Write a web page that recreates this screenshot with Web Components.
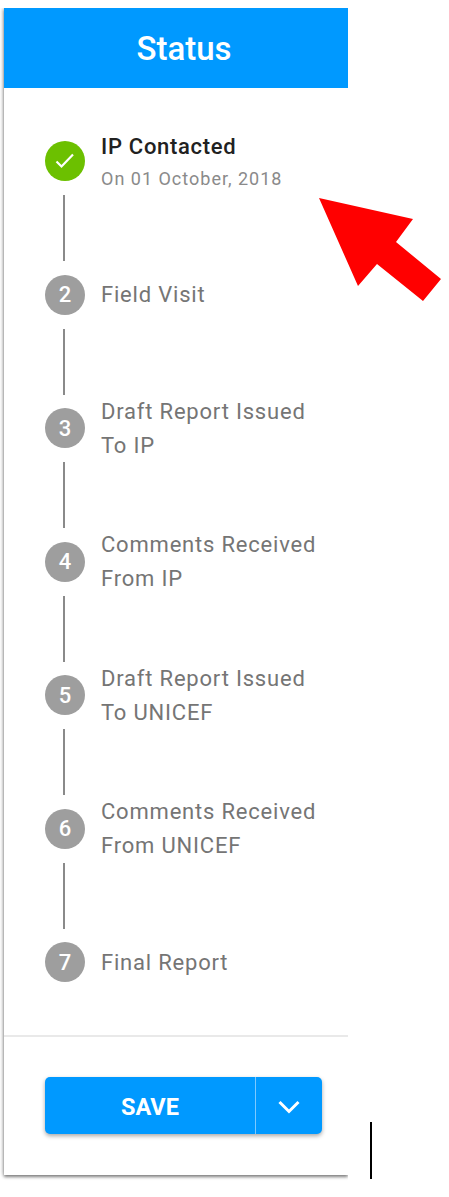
<!DOCTYPE html>
<html>
<head>
<meta charset="utf-8">
<style>
    html, body { margin: 0; background: #fff; }
    body { width: 449px; height: 1197px; position: relative; overflow: hidden; font-family: Roboto, "Liberation Sans", sans-serif; }
    status-panel { margin: 8px 0 0 4px; }
</style>
</head>
<body>
<status-panel title-text="Status">
    <status-step state="done" label="IP Contacted" sub="On 01 October, 2018"></status-step>
    <status-step num="2" label="Field Visit"></status-step>
    <status-step num="3" label="Draft Report Issued<br>To IP"></status-step>
    <status-step num="4" label="Comments Received<br>From IP"></status-step>
    <status-step num="5" label="Draft Report Issued<br>To UNICEF"></status-step>
    <status-step num="6" label="Comments Received<br>From UNICEF"></status-step>
    <status-step num="7" label="Final Report" last></status-step>
    <split-button slot="footer" label="SAVE"></split-button>
</status-panel>
<red-arrow></red-arrow>
<script>
const panelTemplate = document.createElement("template");
panelTemplate.innerHTML = `
    <style>
        :host {
            display: block;
            width: 344px;
            height: 1167px;
            background: #fff;
            box-shadow: -1px 0 4px rgba(0,0,0,0.22), 0 2px 3px rgba(0,0,0,0.45);
            clip-path: inset(0 0 -6px -6px);
        }
        .head {
            height: 80px;
            box-sizing: border-box;
            padding-left: 16px;
            display: flex;
            align-items: center;
            justify-content: center;
            background: #0099ff;
            color: #fff;
            font-size: 33px;
            font-weight: 500;
        }
        .steps {
            height: 949px;
            padding-top: 39.5px;
            box-sizing: border-box;
            border-bottom: 2px solid #e9e9e9;
        }
        .foot { padding: 40px 0 0 41px; }
    </style>
    <div class="head" id="p_title"></div>
    <div class="steps"><slot></slot></div>
    <div class="foot"><slot name="footer"></slot></div>
`;

class StatusPanel extends HTMLElement {
    constructor() {
        super();
        this.attachShadow({mode: "open"});
        this.shadowRoot.append(panelTemplate.content.cloneNode(true));
        this.shadowRoot.getElementById("p_title").textContent = this.getAttribute("title-text");
    }
}

const stepTemplate = document.createElement("template");
stepTemplate.innerHTML = `
    <style>
        :host { display: block; }
        .row {
            height: 67.5px;
            padding-left: 41px;
            display: flex;
            align-items: center;
            gap: 16px;
        }
        .dot {
            width: 40px;
            height: 40px;
            flex: none;
            border-radius: 50%;
            display: flex;
            align-items: center;
            justify-content: center;
            background: #9e9e9e;
            color: #fff;
            font-size: 22px;
            font-weight: 500;
        }
        .text {
            color: #757575;
            font-size: 22px;
            line-height: 34px;
            letter-spacing: 0.8px;
            padding-top: 1px;
        }
        .line {
            width: 2px;
            height: 66px;
            margin-left: 59px;
            background: #8a8a8a;
        }
        :host([state="done"]) .dot { background: #6cc000; }
        :host([state="done"]) .text { color: #212121; font-weight: 500; line-height: 32px; letter-spacing: 0.7px; padding-top: 4px; }
        :host([last]) .line { display: none; }
        .sub { display: block; color: #8a8a8a; font-size: 18px; font-weight: 400; letter-spacing: 1px; }
    </style>
    <div class="row">
        <div class="dot" id="s_dot"></div>
        <div class="text" id="s_text"></div>
    </div>
    <div class="line"></div>
`;

class StatusStep extends HTMLElement {
    constructor() {
        super();
        this.attachShadow({mode: "open"});
        this.shadowRoot.append(stepTemplate.content.cloneNode(true));

        let dot = this.shadowRoot.getElementById("s_dot");
        let text = this.shadowRoot.getElementById("s_text");
        if (this.getAttribute("state") === "done") {
            dot.innerHTML = `<svg width="24" height="24" viewBox="0 0 24 24" fill="none" stroke="#fff" stroke-width="2.2"><path d="M3.5 12.5 L8.5 17.5 L20 5.5"/></svg>`;
        } else {
            dot.textContent = this.getAttribute("num");
        }
        text.innerHTML = this.getAttribute("label");
        if (this.hasAttribute("sub")) {
            let sub = document.createElement("span");
            sub.className = "sub";
            sub.textContent = this.getAttribute("sub");
            text.append(sub);
        }
    }
}

const buttonTemplate = document.createElement("template");
buttonTemplate.innerHTML = `
    <style>
        :host {
            display: flex;
            width: 277px;
            height: 57px;
            border-radius: 5px;
            background: #0099ff;
            color: #fff;
            box-shadow: 0 2px 4px rgba(0,0,0,0.35);
            overflow: hidden;
        }
        .main {
            width: 210px;
            padding-top: 2px;
            box-sizing: border-box;
            display: flex;
            align-items: center;
            justify-content: center;
            font-size: 23.5px;
            font-weight: 700;
        }
        .more {
            flex: 1;
            padding-top: 2px;
            display: flex;
            align-items: center;
            justify-content: center;
            border-left: 1px solid #7cc9ff;
        }
    </style>
    <div class="main" id="b_label"></div>
    <div class="more">
        <svg width="22" height="14" viewBox="0 0 22 14" fill="none" stroke="#fff" stroke-width="3"><path d="M1.5 2 L11 11.5 L20.5 2"/></svg>
    </div>
`;

class SplitButton extends HTMLElement {
    constructor() {
        super();
        this.attachShadow({mode: "open"});
        this.shadowRoot.append(buttonTemplate.content.cloneNode(true));
        this.shadowRoot.getElementById("b_label").textContent = this.getAttribute("label");
    }
}

const arrowTemplate = document.createElement("template");
arrowTemplate.innerHTML = `
    <style>
        /* annotation drawn over the screenshot */
        :host { position: absolute; left: 0; top: 0; width: 449px; height: 1197px; pointer-events: none; }
        svg { display: block; }
    </style>
    <svg width="449" height="1197" viewBox="0 0 449 1197">
        <polygon fill="#ff0000" points="319,198 413,219 396,242 441,279 423,301 377,264 358,286"/>
        <rect x="370" y="1122" width="2" height="57" fill="#000"/>
    </svg>
`;

class RedArrow extends HTMLElement {
    constructor() {
        super();
        this.attachShadow({mode: "open"});
        this.shadowRoot.append(arrowTemplate.content.cloneNode(true));
    }
}

customElements.define("status-panel", StatusPanel);
customElements.define("status-step", StatusStep);
customElements.define("split-button", SplitButton);
customElements.define("red-arrow", RedArrow);
</script>
</body>
</html>
